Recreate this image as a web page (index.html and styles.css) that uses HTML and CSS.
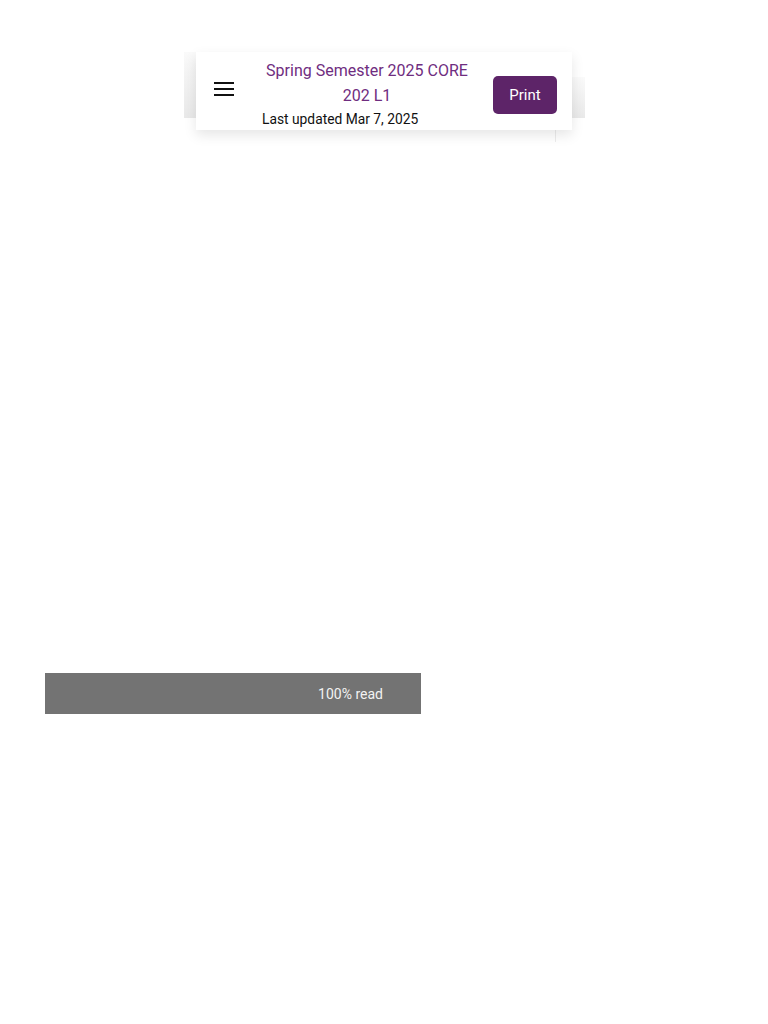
FILE: index.html
```html
<!DOCTYPE html>
<html>
<head>
<meta charset="utf-8">
<link rel="stylesheet" href="styles.css">
</head>
<body>
<div class="page">
  <div class="stage">
    <div class="strip strip-left"></div>
    <header class="card">
      <button class="menu" aria-label="Menu">
        <svg width="20" height="14" viewBox="0 0 20 14"><rect x="0" y="0" width="20" height="2" fill="#111"/><rect x="0" y="6" width="20" height="2" fill="#111"/><rect x="0" y="12" width="20" height="2" fill="#111"/></svg>
      </button>
      <div class="titles">
        <div class="title">Spring Semester 2025 CORE 202 L1</div>
        <div class="updated">Last updated Mar 7, 2025</div>
      </div>
      <button class="print">Print</button>
    </header>
    <div class="strip strip-right"></div>
  </div>
  <div class="progress">
    <span class="progress-text">100% read</span>
  </div>
</div>
</body>
</html>
```
FILE: styles.css
```css
html, body {
  margin: 0;
  padding: 0;
  background: #ffffff;
  font-family: Roboto, "Liberation Sans", sans-serif;
}
.page {
  padding-top: 52px;
}
.stage {
  position: relative;
  display: flex;
  margin-left: 184px;
  width: 401px;
  height: 78px;
}
.stage::after {
  content: "";
  position: absolute;
  left: 371px;
  top: 78px;
  width: 1px;
  height: 12px;
  background: #ececec;
}
.strip {
  flex: none;
  background: linear-gradient(to bottom, #fafafa, #e9e9e9);
}
.strip-left {
  width: 12px;
  height: 66px;
}
.strip-right {
  width: 13px;
  height: 41px;
  margin-top: 25px;
}
.card {
  flex: none;
  width: 376px;
  height: 78px;
  box-sizing: border-box;
  background: #ffffff;
  box-shadow: 0 5px 12px rgba(0, 0, 0, 0.10);
  display: flex;
  align-items: flex-start;
  padding-left: 18px;
  position: relative;
  z-index: 1;
}
.menu {
  flex: none;
  margin-top: 30px;
  padding: 0;
  border: 0;
  background: none;
  width: 20px;
  height: 14px;
  display: block;
}
.menu svg {
  display: block;
}
.titles {
  flex: none;
  width: 210px;
  margin-left: 28px;
  padding-top: 6px;
}
.title {
  color: #6f2d80;
  font-size: 16px;
  line-height: 25px;
  text-align: center;
}
.updated {
  color: #111111;
  font-size: 13.8px;
  line-height: 18px;
  margin-top: 2px;
}
.print {
  flex: none;
  margin-top: 24px;
  margin-left: 21px;
  width: 64px;
  height: 38px;
  border: 0;
  border-radius: 5px;
  background: #5d2468;
  color: #ffffff;
  font-family: Roboto, "Liberation Sans", sans-serif;
  font-size: 15px;
  padding: 0;
}
.progress {
  margin-top: 543px;
  margin-left: 45px;
  width: 376px;
  height: 41px;
  background: #737373;
  display: flex;
  align-items: center;
  justify-content: flex-end;
  padding-right: 38px;
  box-sizing: border-box;
}
.progress-text {
  color: #f2f2f2;
  font-size: 14px;
}
```
